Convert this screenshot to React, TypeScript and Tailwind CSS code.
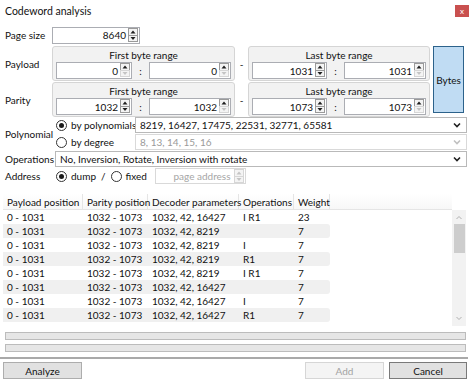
import React from 'react';

// --- small win32-ish widgets ---
function Spin({ up = true, down = true }: { up?: boolean; down?: boolean }) {
  const on = '#1e1e1e';
  const off = '#c4c4c4';
  return (
    <div className="flex flex-col w-[10px] h-[15px] shrink-0">
      <svg width="10" height="8" className="block">
        <rect x="0.5" y="0.5" width="9" height="7" fill="#f4f4f4" stroke={up ? '#9a9a9a' : '#d6d6d6'} />
        <polygon points="2.5,5.5 5,2.5 7.5,5.5" fill={up ? on : off} />
      </svg>
      <svg width="10" height="7" className="block -mt-px">
        <rect x="0.5" y="0.5" width="9" height="6" fill="#f4f4f4" stroke={down ? '#9a9a9a' : '#d6d6d6'} />
        <polygon points="2.5,2 5,5 7.5,2" fill={down ? on : off} />
      </svg>
    </div>
  );
}

function NumBox({ value, w, up, down }: { value: string; w: string; up?: boolean; down?: boolean }) {
  return (
    <div className={`flex items-center h-[17px] bg-white border border-[#abadb3] pl-1 pr-px ${w}`}>
      <span className="flex-1 text-right pr-[2px]">{value}</span>
      <Spin up={up} down={down} />
    </div>
  );
}

function Chevron({ dim }: { dim?: boolean }) {
  return (
    <svg width="8" height="6" className="shrink-0">
      <polyline points="1,1.5 4,4.5 7,1.5" fill="none" stroke={dim ? '#c0c0c0' : '#202020'} strokeWidth="1.6" />
    </svg>
  );
}

function Combo({ text, dim }: { text: string; dim?: boolean }) {
  return (
    <div className={`flex-1 flex items-center h-[16px] border ${dim ? 'border-[#d9d9d9] text-[#9a9a9a]' : 'border-[#b9b9b9]'} bg-white pl-[4px] pr-[5px]`}>
      <span className="flex-1">{text}</span>
      <Chevron dim={dim} />
    </div>
  );
}

function Radio({ checked }: { checked?: boolean }) {
  return (
    <span className="w-[11px] h-[11px] rounded-full border border-[#333] bg-white flex items-center justify-center shrink-0">
      {checked && <span className="w-[5px] h-[5px] rounded-full bg-[#1a1a1a]" />}
    </span>
  );
}

function RangeGroup({ title, a, b, w }: { title: string; a: [string, boolean]; b: string; w: string }) {
  return (
    <div className={`${w} h-[35px] rounded-[3px] border border-[#d5d5d5] bg-[#f2f2f2] px-[3px] flex flex-col`}>
      <div className="text-center h-[14px] leading-[14px] mt-px">{title}</div>
      <div className="flex items-center">
        <NumBox value={a[0]} w="flex-1" up down={a[1]} />
        <span className="w-[17px] text-center">:</span>
        <NumBox value={b} w="w-[82px]" up down={false} />
      </div>
    </div>
  );
}

const rows = [
  ['0 - 1031', '1032 - 1073', '1032, 42, 16427', 'I R1', '23'],
  ['0 - 1031', '1032 - 1073', '1032, 42, 8219', '', '7'],
  ['0 - 1031', '1032 - 1073', '1032, 42, 8219', 'I', '7'],
  ['0 - 1031', '1032 - 1073', '1032, 42, 8219', 'R1', '7'],
  ['0 - 1031', '1032 - 1073', '1032, 42, 8219', 'I R1', '7'],
  ['0 - 1031', '1032 - 1073', '1032, 42, 16427', '', '7'],
  ['0 - 1031', '1032 - 1073', '1032, 42, 16427', 'I', '7'],
  ['0 - 1031', '1032 - 1073', '1032, 42, 16427', 'R1', '7'],
];

const cols = [
  { name: 'Payload position', w: 'w-[80px]' },
  { name: 'Parity position', w: 'w-[65px]' },
  { name: 'Decoder parameters', w: 'w-[91px]' },
  { name: 'Operations', w: 'w-[55px]' },
  { name: 'Weight', w: 'w-[36px]' },
];

// --- MAIN ---
export default function App() {
  return (
    <div className="w-[474px] h-[383px] bg-white text-[#111] text-[10px] leading-[14px] whitespace-nowrap font-['Lato',sans-serif] flex flex-col overflow-hidden">
      {/* title bar */}
      <div className="h-[22px] flex items-center pl-[5px] pr-[5px] shrink-0">
        <span className="flex-1 text-[10.5px]">Codeword analysis</span>
        <span className="w-[14px] h-[12px] bg-[#c9504f] text-white text-[8px] leading-[12px] text-center">x</span>
      </div>

      <div className="flex flex-col pl-[5px] pr-[7px] pt-[5px]">
        {/* page size */}
        <div className="flex items-center h-[16px]">
          <span className="w-[47px]">Page size</span>
          <NumBox value="8640" w="w-[88px]" up down />
        </div>

        {/* ranges + bytes */}
        <div className="flex mt-[3px]">
          <div className="flex flex-col gap-px">
            <div className="flex items-center">
              <span className="w-[47px]">Payload</span>
              <RangeGroup title="First byte range" a={['0', false]} b="0" w="w-[183px]" />
              <span className="w-[13px] text-center">-</span>
              <RangeGroup title="Last byte range" a={['1031', true]} b="1031" w="w-[182px]" />
            </div>
            <div className="flex items-center">
              <span className="w-[47px]">Parity</span>
              <RangeGroup title="First byte range" a={['1032', true]} b="1032" w="w-[183px]" />
              <span className="w-[13px] text-center">-</span>
              <RangeGroup title="Last byte range" a={['1073', true]} b="1073" w="w-[182px]" />
            </div>
          </div>
          <div className="ml-[3px] w-[31px] h-[67px] bg-[#c0dcf3] border border-[#2c628b] flex items-center justify-center">
            Bytes
          </div>
        </div>

        {/* polynomial */}
        <div className="flex items-center">
          <span className="w-[51px]">Polynomial</span>
          <div className="flex-1 flex flex-col gap-px">
            <div className="flex items-center gap-[4px]">
              <Radio checked />
              <span className="w-[60px]">by polynomials</span>
              <Combo text="8219, 16427, 17475, 22531, 32771, 65581" />
            </div>
            <div className="flex items-center gap-[4px]">
              <Radio />
              <span className="w-[60px]">by degree</span>
              <Combo text="8, 13, 14, 15, 16" dim />
            </div>
          </div>
        </div>

        {/* operations */}
        <div className="flex items-center mt-[1px]">
          <span className="w-[50px]">Operations</span>
          <Combo text="No, Inversion, Rotate, Inversion with rotate" />
        </div>

        {/* address */}
        <div className="flex items-center h-[16px] mt-px">
          <span className="w-[51px]">Address</span>
          <Radio checked />
          <span className="ml-[4px]">dump</span>
          <span className="ml-[5px] mr-[5px]">/</span>
          <Radio />
          <span className="ml-[4px] w-[29px]">fixed</span>
          <div className="w-[91px] h-[16px] flex items-center border border-[#d9d9d9] bg-white pr-px">
            <span className="flex-1 text-right text-[#a6a6a6] pr-[3px]">page address</span>
            <Spin up={false} down={false} />
          </div>
        </div>
      </div>

      {/* results table */}
      <div className="mt-[10px] ml-[3px] mr-[8px] flex">
        <div className="flex-1 flex flex-col">
          <div className="flex h-[16px] border-b border-[#e5e5e5] bg-gradient-to-b from-white to-[#f7f7f7]">
            {cols.map(c => (
              <div key={c.name} className={`${c.w} pl-[4px] border-r border-[#e5e5e5] leading-[16px]`}>{c.name}</div>
            ))}
            <div className="flex-1" />
          </div>
          {rows.map((r, i) => (
            <div key={i} className="flex h-[14px]">
              <div className={`flex rounded-r-[3px] ${i % 2 === 1 ? 'bg-[#f0f0f0]' : ''}`}>
                {r.map((v, j) => (
                  <div key={j} className={`${cols[j].w} pl-[4px] leading-[14px]`}>{v}</div>
                ))}
              </div>
            </div>
          ))}
        </div>
        {/* scrollbar */}
        <div className="w-[14px] mt-[16px] h-[116px] bg-[#f2f2f2] flex flex-col items-center">
          <svg width="8" height="10" className="mt-[3px]"><polyline points="1.5,6 4,3.5 6.5,6" fill="none" stroke="#b0b0b0" strokeWidth="1" /></svg>
          <div className="w-[11px] h-[29px] bg-[#cdcdcd] mt-[1px]" />
          <div className="flex-1" />
          <svg width="8" height="10" className="mb-[3px]"><polyline points="1.5,4 4,6.5 6.5,4" fill="none" stroke="#b0b0b0" strokeWidth="1" /></svg>
        </div>
      </div>

      {/* progress bars */}
      <div className="flex flex-col gap-[4px] pl-[5px] pr-[8px] mt-[6px]">
        <div className="h-[8px] border border-[#bcbcbc] bg-[#e6e6e6]" />
        <div className="h-[8px] border border-[#bcbcbc] bg-[#e6e6e6]" />
      </div>

      <div className="mt-[5px] h-[2px] bg-[#a9a9a9] mr-[6px]" />

      {/* buttons */}
      <div className="flex items-center pl-[3px] pr-[7px] mt-[3px]">
        <button className="w-[79px] h-[17px] bg-[#e1e1e1] border border-[#adadad] leading-none">Analyze</button>
        <div className="flex-1" />
        <button className="w-[79px] h-[17px] bg-[#f4f4f4] border border-[#d6d6d6] text-[#a3a3a3] leading-none">Add</button>
        <button className="ml-[5px] w-[78px] h-[17px] bg-[#e1e1e1] border border-[#7a7a7a] leading-none">Cancel</button>
      </div>
    </div>
  );
}
